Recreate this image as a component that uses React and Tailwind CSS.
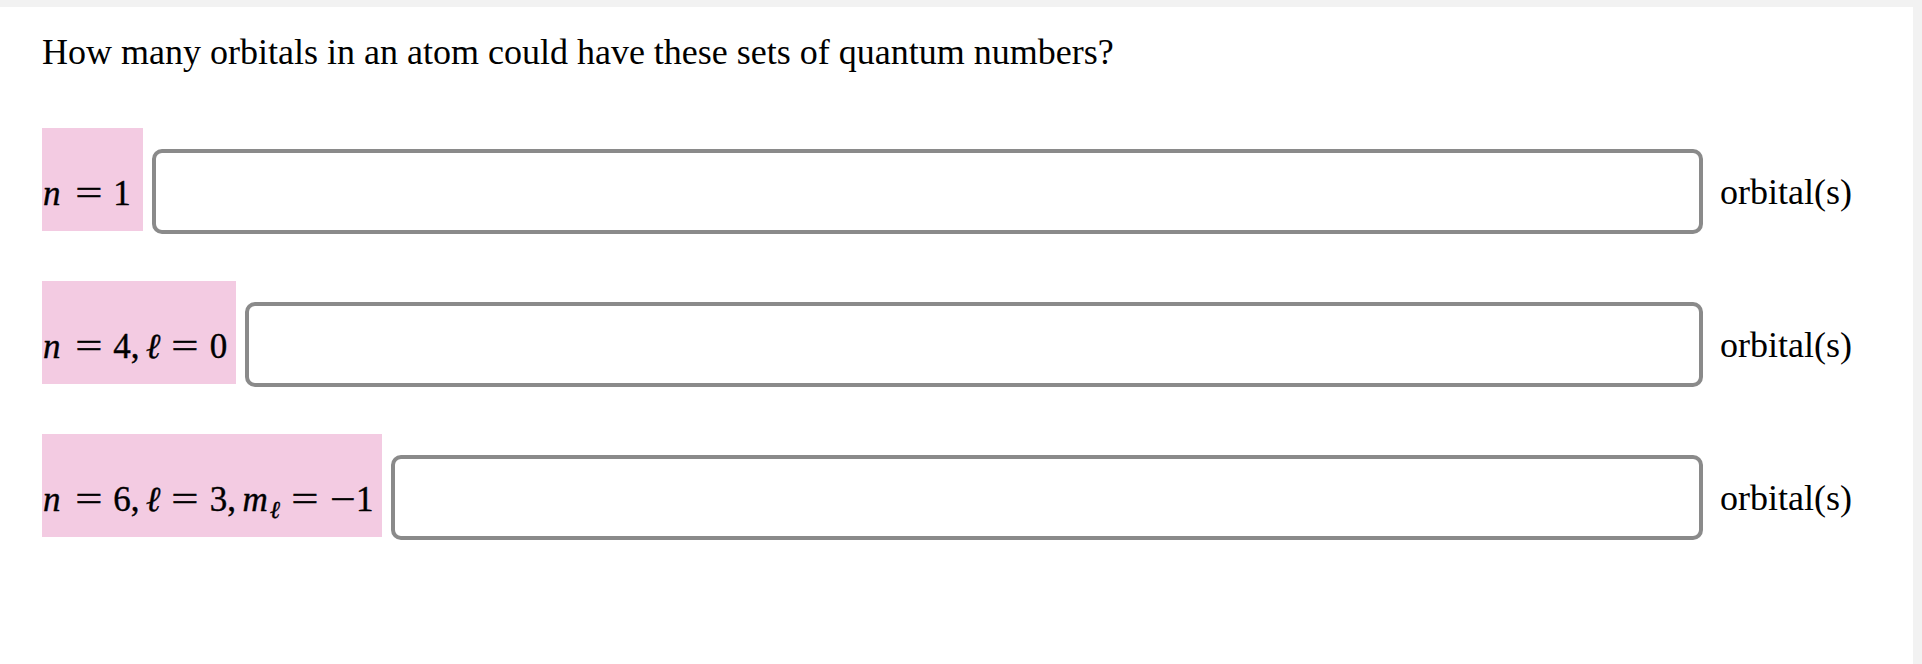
const Eq = () => (
  <span className="mx-[0.42em] inline-block scale-x-[1.38]">=</span>
);

export default function App() {
  const rows = [
    {
      width: "w-[101px]",
      math: (
        <>
          <span className="italic pr-[0.1em]">n</span>
          <Eq />
          <span>1</span>
        </>
      ),
    },
    {
      width: "w-[194px]",
      math: (
        <>
          <span className="italic pr-[0.1em]">n</span>
          <Eq />
          <span>4</span>
          <span className="mr-[0.19em]">,</span>
          <span className="italic">ℓ</span>
          <Eq />
          <span>0</span>
        </>
      ),
    },
    {
      width: "w-[340px]",
      math: (
        <>
          <span className="italic pr-[0.1em]">n</span>
          <Eq />
          <span>6</span>
          <span className="mr-[0.19em]">,</span>
          <span className="italic">ℓ</span>
          <Eq />
          <span>3</span>
          <span className="mr-[0.19em]">,</span>
          <span className="italic pr-[0.06em]">m</span>
          <span className="italic text-[0.7em] relative top-[0.3em]">ℓ</span>
          <Eq />
          <span className="inline-block mx-[0.1em] scale-x-[1.3]">−</span>
          <span>1</span>
        </>
      ),
    },
  ];

  return (
    <div
      className="min-h-screen bg-[#f2f2f2] pt-[7px] pr-[9px] text-black"
      style={{ fontFamily: '"Liberation Serif", "Times New Roman", serif' }}
    >
      <div className="bg-white h-[657px] pl-[42px] pr-[61px] pt-[27px]">
        {/* Question */}
        <p className="text-[36px] leading-[36px]">
          How many orbitals in an atom could have these sets of quantum numbers?
        </p>

        {/* Answer rows */}
        <div className="mt-[58px] flex flex-col gap-[50px]">
          {rows.map((row, i) => (
            <div key={i} className="flex items-start h-[103px]">
              <div
                className={`${row.width} h-[103px] shrink-0 bg-[#f3cbe2] pl-[1px] pt-[52px] text-[35px] leading-[28px] whitespace-nowrap [-webkit-text-stroke:0.4px_black]`}
              >
                {row.math}
              </div>
              <input
                type="text"
                className="ml-[9px] mt-[21px] h-[85px] flex-1 min-w-0 rounded-[10px] border-4 border-[#8a8a8a] bg-white px-3 text-[36px] outline-none"
              />
              <span className="ml-[17px] mt-[46px] text-[36px] leading-[36px] whitespace-nowrap">
                orbital(s)
              </span>
            </div>
          ))}
        </div>
      </div>
    </div>
  );
}
